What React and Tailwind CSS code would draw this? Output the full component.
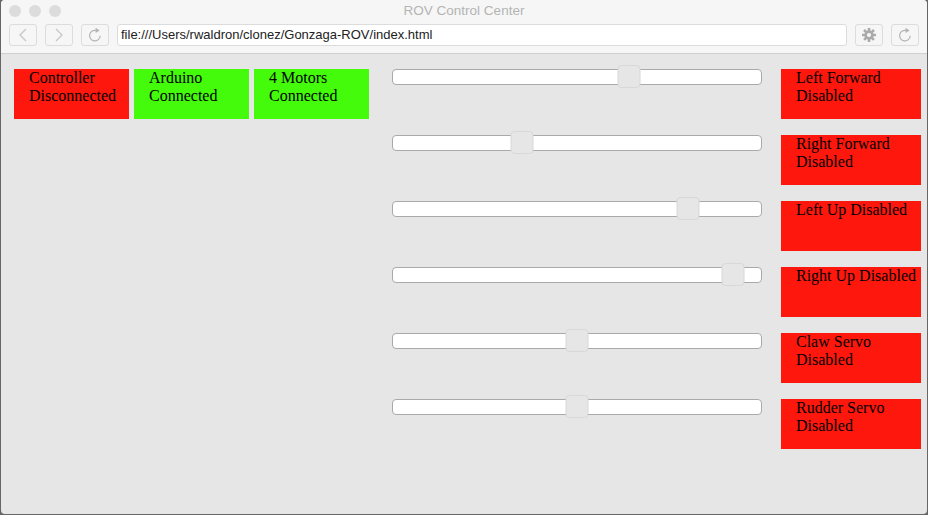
const motors = [
    { label: 'Left Forward Disabled', value: 64 },
    { label: 'Right Forward Disabled', value: 35 },
    { label: 'Left Up Disabled', value: 80.2 },
    { label: 'Right Up Disabled', value: 92.5 },
    { label: 'Claw Servo Disabled', value: 50 },
    { label: 'Rudder Servo Disabled', value: 50 },
];

const status = [
    { lines: ['Controller', 'Disconnected'], on: false },
    { lines: ['Arduino', 'Connected'], on: true },
    { lines: ['4 Motors', 'Connected'], on: true },
];

const ToolButton = ({ children, className = '' }) => (
    <div className={`h-[22px] w-[28px] flex items-center justify-center rounded-[3px] border border-[#dcdcdc] bg-[#f6f6f6] ${className}`}>
        {children}
    </div>
);

const Chevron = ({ right }) => (
    <svg width="10" height="16" viewBox="0 0 10 16" fill="none" stroke="#c8c8c8" strokeWidth="1.4">
        <path d={right ? 'M2 2l6 6-6 6' : 'M8 2L2 8l6 6'} />
    </svg>
);

const Reload = () => (
    <svg width="14" height="16" viewBox="0 0 14 16" fill="none">
        <path d="M8.5 3.6A5.3 5.3 0 1 0 12.2 8.8" stroke="#b4b4b4" strokeWidth="1.2" />
        <path d="M7.6 0.8L11.6 3.4L7.6 6Z" fill="#b4b4b4" />
    </svg>
);

const Gear = () => (
    <svg width="16" height="16" viewBox="0 0 16 16" fill="none">
        <circle cx="8" cy="8" r="3.4" stroke="#aaaaaa" strokeWidth="2.6" />
        <path
            d="M8 1v14M1 8h14M3 3l10 10M13 3L3 13"
            stroke="#aaaaaa"
            strokeWidth="2.6"
            strokeDasharray="3 8 3"
        />
    </svg>
);

const Slider = ({ value }) => (
    <div className="relative h-[16px] w-[370px] rounded-[4px] border border-[#a9a9a9] bg-white">
        <div
            className="absolute top-[-5px] h-[23px] w-[23px] -translate-x-1/2 rounded-[4px] border border-[#d8d8d8] bg-[#e6e6e6]"
            style={{ left: `${value}%` }}
        />
    </div>
);

export default function App() {
    return (
        <div className="h-[515px] w-[928px] overflow-hidden bg-[#666666]">
            <div className="ml-[1px] h-[514px] w-[926px] overflow-hidden rounded-[4px] bg-[#e6e6e6] font-['Liberation_Serif',serif] text-black">
                {/* Window chrome */}
                <div className="h-[54px] border-b border-[#d0d0d0] bg-[#f6f6f6]">
                    <div className="relative flex h-[21px] items-center gap-[8px] pl-[8px] pt-[1px]">
                        <span className="h-[12px] w-[12px] rounded-full bg-[#dcdcdc]" />
                        <span className="h-[12px] w-[12px] rounded-full bg-[#dcdcdc]" />
                        <span className="h-[12px] w-[12px] rounded-full bg-[#dcdcdc]" />
                        <span className="absolute left-0 right-0 top-[2px] text-center font-['Liberation_Sans',sans-serif] text-[13.5px] leading-[18px] text-[#b4b4b4]">
                            ROV Control Center
                        </span>
                    </div>
                    <div className="flex items-center pl-[8px] pt-[3px]">
                        <ToolButton><Chevron /></ToolButton>
                        <ToolButton className="ml-[8px]"><Chevron right /></ToolButton>
                        <ToolButton className="ml-[8px]"><Reload /></ToolButton>
                        <div className="ml-[8px] flex h-[22px] w-[730px] items-center rounded-[3px] border border-[#dcdcdc] bg-white pl-[3px] font-['Liberation_Sans',sans-serif] text-[13px] text-[#222222]">
                            file:///Users/rwaldron/clonez/Gonzaga-ROV/index.html
                        </div>
                        <ToolButton className="ml-[8px]"><Gear /></ToolButton>
                        <ToolButton className="ml-[8px]"><Reload /></ToolButton>
                    </div>
                </div>

                {/* Content */}
                <div className="flex pl-[13px] pt-[15px]">
                    <div className="flex w-[378px] items-start gap-[5px]">
                        {status.map((item) => (
                            <div
                                key={item.lines[0]}
                                className={`h-[50px] w-[115px] pl-[15px] text-[16px] leading-[18px] ${item.on ? 'bg-[#43fb0a]' : 'bg-[#fe170d]'}`}
                            >
                                {item.lines.map((line) => (
                                    <div key={line}>{line}</div>
                                ))}
                            </div>
                        ))}
                    </div>

                    <div className="flex flex-col gap-[16px]">
                        {motors.map((motor) => (
                            <div key={motor.label} className="flex items-start gap-[19px]">
                                <Slider value={motor.value} />
                                <div className="h-[50px] w-[140px] bg-[#fe170d] pl-[15px] text-[16px] leading-[18px]">
                                    {motor.label}
                                </div>
                            </div>
                        ))}
                    </div>
                </div>
            </div>
        </div>
    );
}
